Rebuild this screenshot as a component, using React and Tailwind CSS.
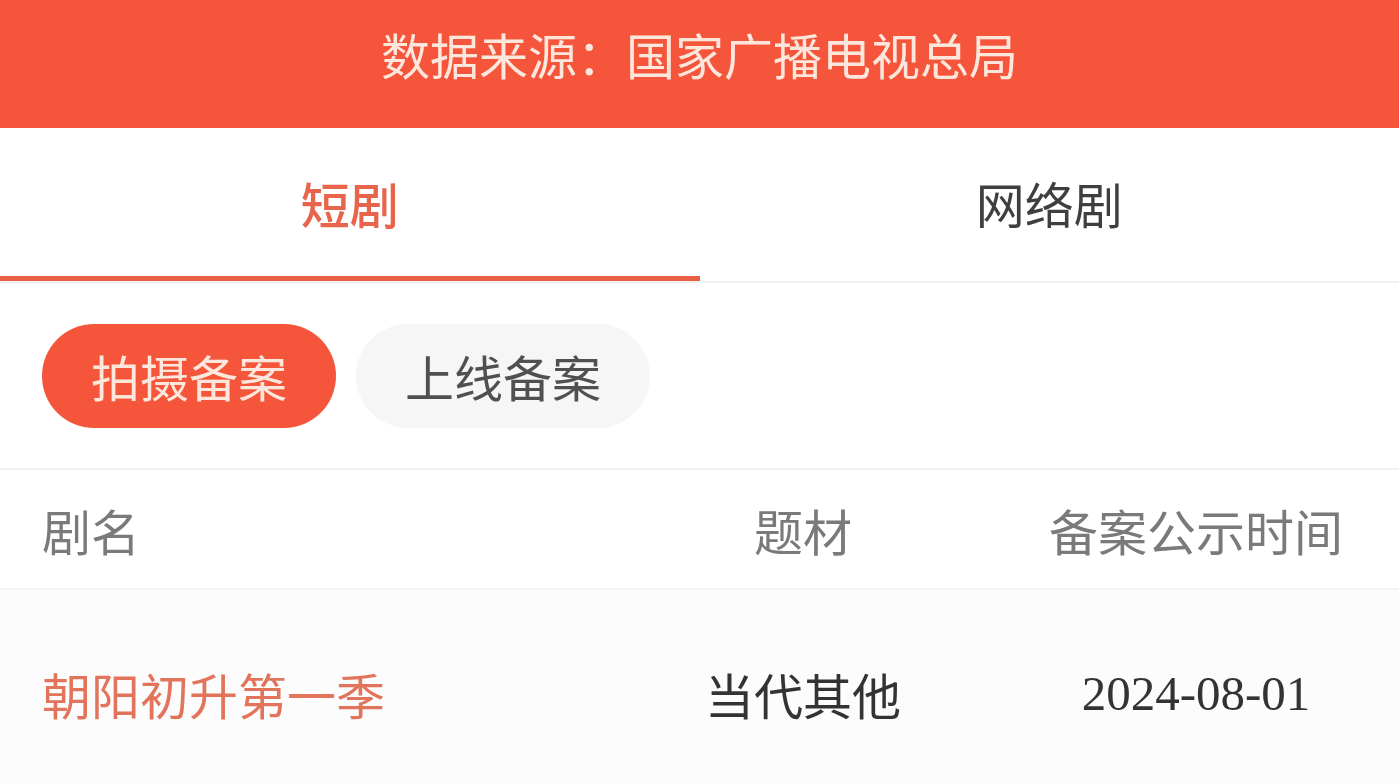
import React, { useState } from 'react';

const rows = [
  { name: '朝阳初升第一季', genre: '当代其他', date: '2024-08-01' },
];

export default function App() {
  const [tab, setTab] = useState('short');
  const [kind, setKind] = useState('shoot');

  return (
    <div className="w-[1399px] h-[784px] overflow-hidden bg-white font-['Noto_Sans_CJK_SC','Noto_Sans',sans-serif]">
      {/* source banner */}
      <div className="h-[128px] bg-[#f5553a] flex items-center justify-center pb-[22px]">
        <span className="text-[49px] leading-none text-[#fde6dc]">数据来源：国家广播电视总局</span>
      </div>

      {/* tabs */}
      <div className="flex h-[155px] border-b-2 border-[#f1f1f1]">
        {[
          { key: 'short', label: '短剧' },
          { key: 'web', label: '网络剧' },
        ].map((t) => (
          <button
            key={t.key}
            onClick={() => setTab(t.key)}
            className={`flex-1 flex items-center justify-center text-[49px] leading-none border-b-[5px] ${
              tab === t.key ? 'text-[#e8654c] font-medium border-[#e85f45]' : 'text-[#3f3f3f] border-transparent'
            }`}
          >
            {t.label}
          </button>
        ))}
      </div>

      {/* record type pills */}
      <div className="flex items-center gap-[20px] px-[42px] h-[187px] border-b-2 border-[#f0f0f0]">
        {[
          { key: 'shoot', label: '拍摄备案' },
          { key: 'online', label: '上线备案' },
        ].map((p) => (
          <button
            key={p.key}
            onClick={() => setKind(p.key)}
            className={`h-[104px] w-[294px] rounded-full text-[49px] leading-none ${
              kind === p.key ? 'bg-[#f5553a] text-[#fde6dc]' : 'bg-[#f6f6f6] text-[#505050]'
            }`}
          >
            {p.label}
          </button>
        ))}
      </div>

      {/* table */}
      <div className="grid grid-cols-[1fr_380px_406px] h-[120px] items-center pl-[42px] border-b-2 border-[#f3f3f3] text-[49px] leading-none text-[#7a7a7a]">
        <span>剧名</span>
        <span className="text-center">题材</span>
        <span className="text-center">备案公示时间</span>
      </div>
      {rows.map((r) => (
        <div key={r.name} className="grid grid-cols-[1fr_380px_406px] h-[206px] items-center pl-[42px] bg-[#fcfcfc] text-[49px] leading-none">
          <span className="text-[#e2745c]">{r.name}</span>
          <span className="text-center text-[#333]">{r.genre}</span>
          <span className="text-center text-[#333] font-['Liberation_Serif',serif] text-[49px]">{r.date}</span>
        </div>
      ))}
    </div>
  );
}
